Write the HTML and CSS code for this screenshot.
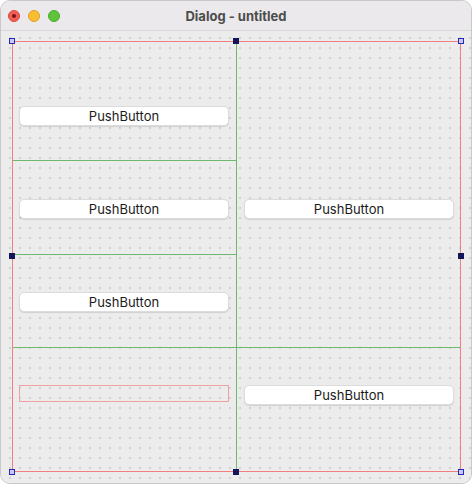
FILE: index.html
```html
<!DOCTYPE html>
<html lang="en">
<head>
    <meta charset="UTF-8">
    <title>Dialog - untitled</title>
    <link rel="stylesheet" href="styles.css">
</head>
<body>
    <div class="window">
      <div class="titlebar">
        <div class="lights">
          <span class="light close"></span>
          <span class="light min"></span>
          <span class="light max"></span>
        </div>
        <div class="title">Dialog - untitled</div>
      </div>

      <div class="form">
        <div class="layout">
          <div class="cell left r1"><div class="btn">PushButton</div></div>
          <div class="cell right tall"><div class="btn">PushButton</div></div>
          <div class="cell left r2"><div class="btn">PushButton</div></div>
          <div class="cell left r3"><div class="btn">PushButton</div></div>
          <div class="cell left r4"><div class="spacer"></div></div>
          <div class="cell right r4"><div class="btn">PushButton</div></div>

          <span class="handle corner tl"></span>
          <span class="handle corner tr"></span>
          <span class="handle corner bl"></span>
          <span class="handle corner br"></span>
          <span class="handle mid tm"></span>
          <span class="handle mid bm"></span>
          <span class="handle mid lm"></span>
          <span class="handle mid rm"></span>
        </div>
      </div>
    </div>
</body>
</html>
```

FILE: styles.css
```css
* {
    margin: 0;
    padding: 0;
    box-sizing: border-box;
}

body {
    background: #ffffff;
    font-family: Inter, "Liberation Sans", sans-serif;
}

.window {
    width: 472px;
    height: 484px;
    border: 1px solid #c9c9c9;
    border-radius: 10px;
    overflow: hidden;
    background: #ececec;
}

.titlebar {
    height: 30px;
    background: #ebe9eb;
    border-bottom: 1px solid #d6d6d6;
    display: flex;
    align-items: center;
    position: relative;
}

.lights {
    display: flex;
    gap: 8px;
    padding-left: 7px;
}

.light {
    width: 12px;
    height: 12px;
    border-radius: 50%;
    display: flex;
    justify-content: center;
    align-items: center;
}

.close {
    background: #ee5f58;
    border: 1px solid #d8493f;
}

.close::after {
    content: "";
    width: 4px;
    height: 4px;
    border-radius: 50%;
    background: #7c130d;
}

.min {
    background: #f8bd30;
    border: 1px solid #dfa224;
}

.max {
    background: #5ec43d;
    border: 1px solid #4aa92c;
}

.title {
    position: absolute;
    left: 0;
    right: 0;
    text-align: center;
    font-size: 13px;
    font-weight: 700;
    color: #4c4c4c;
}

.form {
    height: 453px;
    padding: 10px 0 0 11px;
    background-color: #ececec;
    background-image: radial-gradient(circle, #c2c2c2 0.6px, transparent 0.9px);
    background-size: 10px 10px;
    background-position: 4px 2px;
}

.layout {
    position: relative;
    width: 449px;
    height: 431px;
    border: 1px solid #f08080;
    display: grid;
    grid-template-columns: 224px 223px;
    grid-template-rows: 119px 94px 93px 123px;
}

.cell {
    padding: 0 7px 0 6px;
}

.left {
    border-right: 1px solid #6fb86f;
}

.r1 { grid-row: 1; grid-column: 1; border-bottom: 1px solid #6fb86f; padding-top: 64px; }
.r2 { grid-row: 2; grid-column: 1; border-bottom: 1px solid #6fb86f; padding-top: 38px; }
.r3 { grid-row: 3; grid-column: 1; border-bottom: 1px solid #6fb86f; padding-top: 37px; }
.left.r4 { grid-row: 4; grid-column: 1; padding-top: 37px; }

.tall {
    grid-row: 1 / 4;
    grid-column: 2;
    border-bottom: 1px solid #6fb86f;
    padding: 157px 6px 0 7px;
}

.right.r4 {
    grid-row: 4;
    grid-column: 2;
    padding: 37px 6px 0 7px;
}

.btn {
    height: 20px;
    background: #ffffff;
    border: 1px solid #dcdcdc;
    border-radius: 5px;
    box-shadow: 0 1px 1px rgba(0, 0, 0, 0.12);
    font-size: 13px;
    line-height: 18px;
    text-align: center;
    color: #1a1a1a;
}

.spacer {
    height: 17px;
    border: 1px solid #f0a0a0;
}

.handle {
    position: absolute;
    width: 6px;
    height: 6px;
}

.corner {
    background: #c9c9f2;
    border: 1px solid #2828b8;
}

.mid {
    background: #14145a;
}

.tl { left: -4px; top: -4px; }
.tr { right: -4px; top: -4px; }
.bl { left: -4px; bottom: -4px; }
.br { right: -4px; bottom: -4px; }
.tm { left: 220px; top: -4px; }
.bm { left: 220px; bottom: -4px; }
.lm { left: -4px; top: 211px; }
.rm { right: -4px; top: 211px; }
```
